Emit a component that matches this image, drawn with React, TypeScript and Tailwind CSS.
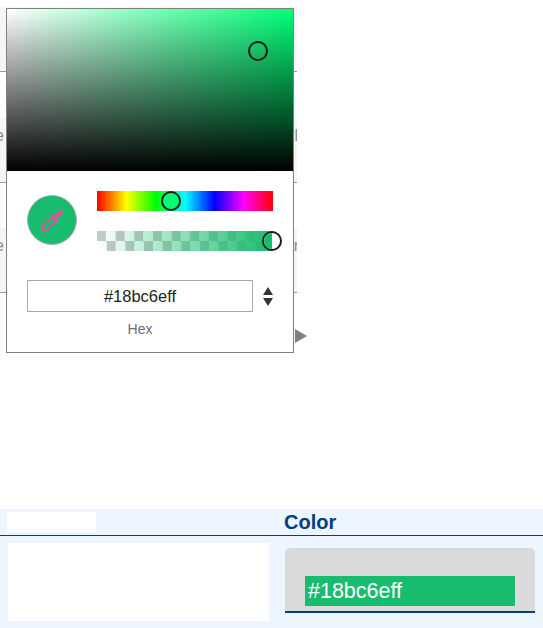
export default function App() {
  const font = { fontFamily: '"Liberation Sans", Arial, sans-serif' };
  return (
    <div style={font} className="relative h-[628px] w-[543px] overflow-hidden bg-white">
      {/* Page behind the popup */}
      <div className="flex h-[509px] w-[297px] flex-col pt-[7px] text-[16px] text-[#888]">
        <div className="h-[65px] shrink-0 border-b border-[#999] bg-[#f5f5f5]"></div>
        <div className="h-[46px] shrink-0"></div>
        <div className="flex h-[65px] shrink-0 items-start justify-between overflow-hidden border-b border-[#999] bg-[#f5f5f5] pt-[6px]">
          <span className="-ml-[5px]">e</span>
          <span className="-mr-[1px]">l</span>
        </div>
        <div className="h-[45px] shrink-0"></div>
        <div className="flex h-[65px] shrink-0 items-start justify-between overflow-hidden border-b border-[#999] bg-[#f5f5f5] pt-[6px]">
          <span className="-ml-[5px]">e</span>
          <span className="-mr-[2px]">r</span>
        </div>
      </div>
      <div className="absolute left-[295px] top-[329px] h-0 w-0 border-y-[7px] border-l-[12px] border-y-transparent border-l-[#808080]"></div>

      {/* Bottom form */}
      <div className="h-[119px] bg-[#edf5fe]">
        <div className="flex h-[27px] border-b border-[#004080] pt-[3px]">
          <div className="ml-[7px] h-[20px] w-[89px] bg-white"></div>
          <div className="ml-[188px] text-[20px] font-bold leading-[20px] text-[#004080]">Color</div>
        </div>
        <div className="flex pt-[7px]">
          <div className="ml-[8px] h-[78px] w-[261px] bg-white"></div>
          <div className="ml-[16px] mt-[5px] flex h-[65px] w-[250px] items-start rounded-t-[5px] border-b-2 border-[#004080] bg-[#dadada] pl-[20px] pt-[28px]">
            <div className="flex h-[30px] w-[210px] items-center bg-[#18bc6e] pl-[3px] text-[21.5px] text-white">#18bc6eff</div>
          </div>
        </div>
      </div>

      {/* Color picker popup */}
      <div className="absolute left-[6px] top-[8px] h-[345px] w-[288px] border border-[#808080] bg-white">
        <div className="h-[162px] bg-[#00ff77]">
          <div className="relative h-full bg-[linear-gradient(to_top,#000,rgba(0,0,0,0)),linear-gradient(to_right,#fff,rgba(255,255,255,0))]">
            <div className="absolute left-[241px] top-[32px] h-[20px] w-[20px] rounded-full border-[2.5px] border-[#1c1c1c]"></div>
          </div>
        </div>
        <div className="flex pl-[20px] pt-[20px]">
          <div className="mt-[4px] flex h-[50px] w-[50px] items-center justify-center rounded-full border border-[#b0b0b0] bg-[#18bc6e]">
            <svg width="26" height="26" viewBox="0 0 26 26" fill="none" stroke="#ea4f98" strokeWidth="2">
              <path d="M3 20 L3 24 L7 24 L17 14 L13 10 Z" strokeLinejoin="round" />
              <path d="M12 7.5 L19.5 15" strokeWidth="2.2" />
              <path d="M17 8.5 L20.5 3.5 L23.5 6 L18.5 10.5 Z" fill="#ea4f98" strokeWidth="1.4" />
            </svg>
          </div>
          <div className="ml-[20px] flex w-[176px] flex-col gap-[20px]">
            <div className="relative h-[20px] bg-[linear-gradient(to_right,#f00,#ff0,#0f0,#0ff,#00f,#f0f,#f00)]">
              <div className="absolute left-[64px] top-[0px] h-[20px] w-[20px] rounded-full border-[2.5px] border-[#1c1c1c] bg-[#00ff77]"></div>
            </div>
            <div className="relative h-[20px] bg-[repeating-conic-gradient(#fff_0_25%,#c8c8c8_0_50%)] bg-[length:18.67px_20px]">
              <div className="h-full bg-[linear-gradient(to_right,rgba(24,188,110,0),#18bc6e)]"></div>
              <div className="absolute left-[165px] top-[0px] h-[20px] w-[20px] overflow-hidden rounded-full border-[2.5px] border-[#1c1c1c] bg-white">
                <div className="h-full w-[8px] bg-[#18bc6e]"></div>
              </div>
            </div>
          </div>
        </div>
        <div className="flex items-center pl-[20px] pt-[29px]">
          <div className="flex h-[32px] w-[226px] items-center justify-center border border-[#aaa] text-[16.5px] text-[#222]">#18bc6eff</div>
          <div className="ml-[10px] flex flex-col gap-[3px]">
            <div className="h-0 w-0 border-x-[5.5px] border-b-[8px] border-x-transparent border-b-[#333]"></div>
            <div className="h-0 w-0 border-x-[5.5px] border-t-[8px] border-x-transparent border-t-[#333]"></div>
          </div>
        </div>
        <div className="w-[246px] pt-[9px] pl-[20px] text-center text-[14px] leading-[16px] text-[#6e6e6e]">Hex</div>
      </div>
    </div>
  );
}
